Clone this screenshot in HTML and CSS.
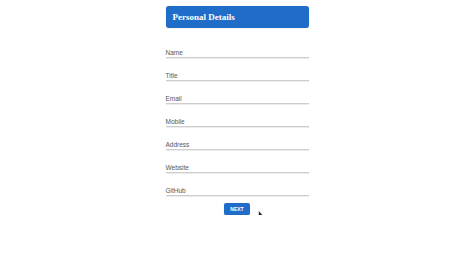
FILE: index.html
```html
<!DOCTYPE html>
<html>
<head>
<meta charset="utf-8">
<link rel="stylesheet" href="styles.css">
</head>
<body>
<div class="page">
  <div class="form">
    <div class="header">Personal Details</div>
    <div class="fields">
      <div class="field"><span class="label">Name</span></div>
      <div class="field"><span class="label">Title</span></div>
      <div class="field"><span class="label">Email</span></div>
      <div class="field"><span class="label">Mobile</span></div>
      <div class="field"><span class="label">Address</span></div>
      <div class="field"><span class="label">Website</span></div>
      <div class="field"><span class="label">GitHub</span></div>
    </div>
    <div class="actions">
      <button class="next">NEXT</button>
      <svg class="cursor" width="6" height="9" viewBox="0 0 6 9"><path d="M0.5 0.5 L0.5 7 L2 5.6 L3.2 8.3 L4.2 7.9 L3 5.3 L5 5.3 Z" fill="#222" stroke="#fff" stroke-width="0.6"/></svg>
    </div>
  </div>
</div>
</body>
</html>
```
FILE: styles.css
```css
html, body { margin: 0; padding: 0; background: #fff; }
.page { display: flex; justify-content: center; padding-top: 6px; }
.form { width: 143px; display: flex; flex-direction: column; }
.header {
  background: #1f6dc8;
  color: #fff;
  font-family: "Liberation Serif", serif;
  font-weight: bold;
  font-size: 9px;
  height: 22px;
  line-height: 22px;
  padding-left: 7px;
  border-radius: 3px;
  box-shadow: 0 0 1px rgba(0,0,0,0.3);
}
.fields { display: flex; flex-direction: column; gap: 14px; margin-top: 21px; }
.field {
  height: 8px;
  border-bottom: 1px solid #cdcdcd;
  box-shadow: 0 1px 0 #ececec;
  display: flex; align-items: flex-end;
}
.label {
  font-family: "Liberation Sans", Arial, sans-serif;
  font-size: 6.5px;
  color: #555;
  line-height: 8px;
  padding-bottom: 0;
}
.actions { display: flex; justify-content: center; margin-top: 7px; position: relative; }
.next {
  background: #1f6dc8;
  color: #fff;
  border: none;
  border-radius: 2px;
  font-family: "Liberation Sans", Arial, sans-serif;
  font-weight: bold;
  font-size: 5px;
  width: 26px;
  height: 12px;
  padding: 0;
  box-shadow: 0 1px 1px rgba(0,0,0,0.25);
}
.cursor { position: absolute; left: 92px; top: 7px; }
```
